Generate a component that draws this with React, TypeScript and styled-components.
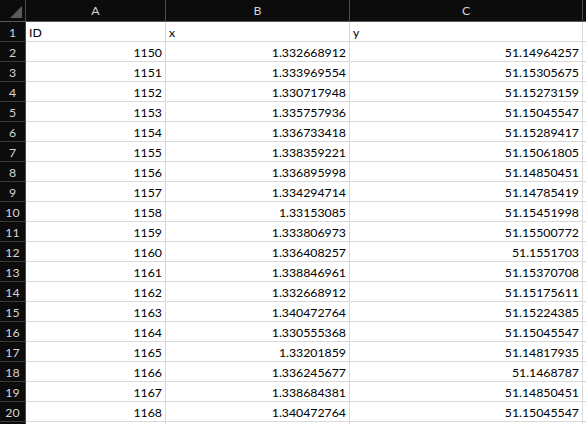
import React from "react";
import styled, { createGlobalStyle } from "styled-components";

const Global = createGlobalStyle`
  html, body { margin: 0; padding: 0; background: #ffffff; overflow: hidden; }
  body { font-family: Lato, "Liberation Sans", sans-serif; }
`;

const rows: [string, string, string][] = [
  ["1150", "1.332668912", "51.14964257"],
  ["1151", "1.333969554", "51.15305675"],
  ["1152", "1.330717948", "51.15273159"],
  ["1153", "1.335757936", "51.15045547"],
  ["1154", "1.336733418", "51.15289417"],
  ["1155", "1.338359221", "51.15061805"],
  ["1156", "1.336895998", "51.14850451"],
  ["1157", "1.334294714", "51.14785419"],
  ["1158", "1.33153085", "51.15451998"],
  ["1159", "1.333806973", "51.15500772"],
  ["1160", "1.336408257", "51.1551703"],
  ["1161", "1.338846961", "51.15370708"],
  ["1162", "1.332668912", "51.15175611"],
  ["1163", "1.340472764", "51.15224385"],
  ["1164", "1.330555368", "51.15045547"],
  ["1165", "1.33201859", "51.14817935"],
  ["1166", "1.336245677", "51.1468787"],
  ["1167", "1.338684381", "51.14850451"],
  ["1168", "1.340472764", "51.15045547"],
];

const Sheet = styled.div`
  display: grid;
  grid-template-columns: 26px 140px 184px 233px 1fr;
  grid-template-rows: 22px repeat(21, 20px);
  width: 586px;
  height: 424px;
  overflow: hidden;
  font-size: 12.3px;
  line-height: 15px;
`;

const Corner = styled.div`
  background: #0c0c0c;
  border-right: 1px solid #4a4a4a;
  border-bottom: 1px solid #5a5a5a;
  box-sizing: border-box;
  position: relative;
`;

const CornerTriangle = styled.svg`
  position: absolute;
  left: 10px;
  top: 6px;
`;

const ColHead = styled.div<{ $last?: boolean }>`
  background: #0c0c0c;
  color: #d4d4d4;
  box-sizing: border-box;
  border-right: ${(p) => (p.$last ? "none" : "1px solid #4a4a4a")};
  border-bottom: 1px solid #5a5a5a;
  display: flex;
  align-items: center;
  justify-content: center;
`;

const RowHead = styled.div`
  background: #0c0c0c;
  color: #d4d4d4;
  box-sizing: border-box;
  border-right: 1px solid #4a4a4a;
  border-bottom: 1px solid #3c3c3c;
  display: flex;
  align-items: flex-end;
  justify-content: center;
  padding-bottom: 1px;
`;

const Cell = styled.div<{ $num?: boolean; $last?: boolean }>`
  background: #ffffff;
  color: #000000;
  box-sizing: border-box;
  border-right: ${(p) => (p.$last ? "none" : "1px solid #d9d9d9")};
  border-bottom: 1px solid #d9d9d9;
  display: flex;
  align-items: flex-end;
  justify-content: ${(p) => (p.$num ? "flex-end" : "flex-start")};
  padding: 0 3px 1px 3px;
  white-space: nowrap;
  overflow: hidden;
`;

export default function App() {
  return (
    <>
      <Global />
      <Sheet>
        <Corner>
          <CornerTriangle width="13" height="13" viewBox="0 0 13 13">
            <polygon points="12,0 12,12 0,12" fill="#5c5c5c" />
          </CornerTriangle>
        </Corner>
        <ColHead>A</ColHead>
        <ColHead>B</ColHead>
        <ColHead>C</ColHead>
        <ColHead $last />

        <RowHead>1</RowHead>
        <Cell>ID</Cell>
        <Cell>x</Cell>
        <Cell>y</Cell>
        <Cell $last />

        {rows.map((r, i) => (
          <React.Fragment key={i}>
            <RowHead>{i + 2}</RowHead>
            <Cell $num>{r[0]}</Cell>
            <Cell $num>{r[1]}</Cell>
            <Cell $num>{r[2]}</Cell>
            <Cell $last />
          </React.Fragment>
        ))}

        <RowHead />
        <Cell />
        <Cell />
        <Cell />
        <Cell $last />
      </Sheet>
    </>
  );
}
